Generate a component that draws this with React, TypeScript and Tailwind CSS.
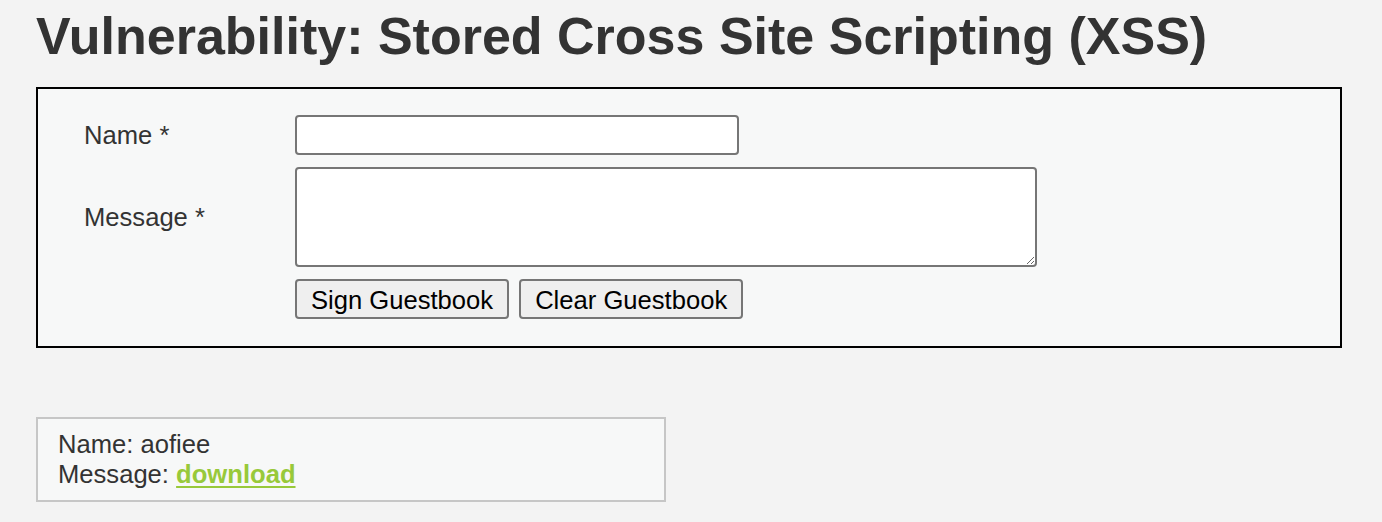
import { useState } from "react";

const entries = [{ name: "aofiee", message: "download" }];

const App = () => {
  const [name, setName] = useState("");
  const [message, setMessage] = useState("");

  return (
    <div className="min-h-[522px] bg-[#f3f3f3] px-[36px] pt-[6px] pb-[20px] font-['Liberation_Sans',Arial,sans-serif] text-[#333]">
      <h1 className="text-[52px] leading-[60px] font-bold whitespace-nowrap">
        Vulnerability: Stored Cross Site Scripting (XSS)
      </h1>

      {/* guestbook form */}
      <div className="mt-[21px] w-[1306px] h-[261px] border-2 border-black bg-[#f7f8f8] pl-[46px] pt-[26px]">
        <form
          className="grid grid-cols-[211px_auto] gap-y-[12px] items-center text-[25.6px]"
          onSubmit={(e) => e.preventDefault()}
        >
          <label>Name *</label>
          <input
            type="text"
            value={name}
            onChange={(e) => setName(e.target.value)}
            className="w-[444px] h-[40px] bg-white border-2 border-[#767676] rounded-[4px] px-2 outline-none"
          />
          <label>Message *</label>
          <textarea
            value={message}
            onChange={(e) => setMessage(e.target.value)}
            className="block w-[742px] h-[100px] bg-white border-2 border-[#767676] rounded-[4px] px-2 outline-none resize"
          />
          <div />
          <div className="flex gap-[10px]">
            <button
              type="submit"
              className="h-[40px] px-[14px] bg-[#efefef] border-2 border-[#767676] rounded-[4px] text-black"
            >
              Sign Guestbook
            </button>
            <button
              type="button"
              className="h-[40px] px-[14px] bg-[#efefef] border-2 border-[#767676] rounded-[4px] text-black"
            >
              Clear Guestbook
            </button>
          </div>
        </form>
      </div>

      {/* stored entries */}
      {entries.map((entry, i) => (
        <div
          key={i}
          className="mt-[69px] w-[630px] h-[85px] border-2 border-[#c6c6c6] bg-[#f7f8f8] pl-[20px] pt-[10px] text-[25.6px] leading-[30px]"
        >
          <div>Name: {entry.name}</div>
          <div>
            Message:{" "}
            <a
              href="#"
              className="font-bold text-[#98c93a] underline decoration-2 underline-offset-[3px]"
            >
              {entry.message}
            </a>
          </div>
        </div>
      ))}
    </div>
  );
};

export default App;
